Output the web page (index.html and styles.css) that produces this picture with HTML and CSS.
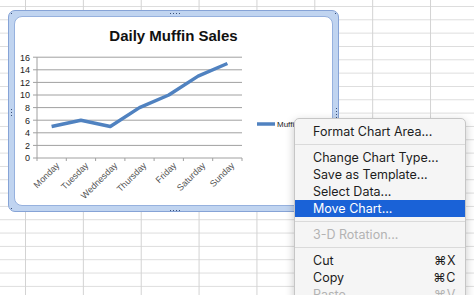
FILE: index.html
```html
<!DOCTYPE html>
<html lang="en">
<head>
    <meta charset="UTF-8">
    <title>Daily Muffin Sales</title>
    <link rel="stylesheet" href="styles.css">
</head>
<body>
    <div class="sheet">
        <div class="chart">
            <span class="handle handle-tl"></span>
            <span class="handle handle-tr"></span>
            <span class="handle handle-bl"></span>
            <span class="handle handle-br"></span>
            <span class="handle handle-top"></span>
            <span class="handle handle-bottom"></span>
            <span class="handle handle-left"></span>
            <span class="handle handle-right"></span>
            <div class="chart-area">
                <div class="chart-title">Daily Muffin Sales</div>
                <svg class="plot" width="318" height="157" viewBox="0 0 318 157">
                    <g class="grid">
                        <line x1="18" y1="9.2" x2="227" y2="9.2"/>
                        <line x1="18" y1="21.8" x2="227" y2="21.8"/>
                        <line x1="18" y1="34.4" x2="227" y2="34.4"/>
                        <line x1="18" y1="47" x2="227" y2="47"/>
                        <line x1="18" y1="59.6" x2="227" y2="59.6"/>
                        <line x1="18" y1="72.2" x2="227" y2="72.2"/>
                        <line x1="18" y1="84.8" x2="227" y2="84.8"/>
                        <line x1="18" y1="97.4" x2="227" y2="97.4"/>
                        <line x1="18" y1="110" x2="227" y2="110"/>
                        <line x1="22" y1="9.2" x2="22" y2="113"/>
                        <line x1="51.3" y1="110" x2="51.3" y2="113"/>
                        <line x1="80.6" y1="110" x2="80.6" y2="113"/>
                        <line x1="109.9" y1="110" x2="109.9" y2="113"/>
                        <line x1="139.1" y1="110" x2="139.1" y2="113"/>
                        <line x1="168.4" y1="110" x2="168.4" y2="113"/>
                        <line x1="197.7" y1="110" x2="197.7" y2="113"/>
                        <line x1="227" y1="110" x2="227" y2="113"/>
                    </g>
                    <g class="y-labels">
                        <text x="15" y="12.5">16</text>
                        <text x="15" y="25.1">14</text>
                        <text x="15" y="37.7">12</text>
                        <text x="15" y="50.3">10</text>
                        <text x="15" y="62.9">8</text>
                        <text x="15" y="75.5">6</text>
                        <text x="15" y="88.1">4</text>
                        <text x="15" y="100.7">2</text>
                        <text x="15" y="113.3">0</text>
                    </g>
                    <g class="x-labels">
                        <text transform="translate(45,118) rotate(-45)">Monday</text>
                        <text transform="translate(74,118) rotate(-45)">Tuesday</text>
                        <text transform="translate(103,118) rotate(-45)">Wednesday</text>
                        <text transform="translate(132,118) rotate(-45)">Thursday</text>
                        <text transform="translate(162,118) rotate(-45)">Friday</text>
                        <text transform="translate(191,118) rotate(-45)">Saturday</text>
                        <text transform="translate(220,118) rotate(-45)">Sunday</text>
                    </g>
                    <polyline class="series" points="36.6,78.5 65.9,72.2 95.3,78.5 124.5,59.6 153.8,47 183.1,28.1 212.4,15.5"/>
                    <line class="series" x1="242" y1="76" x2="260" y2="76"/>
                    <text class="legend" x="262" y="78.5">Muffin Sales</text>
                </svg>
            </div>
        </div>

        <div class="context-menu">
            <div class="menu-item">Format Chart Area...</div>
            <div class="menu-sep"></div>
            <div class="menu-item">Change Chart Type...</div>
            <div class="menu-item">Save as Template...</div>
            <div class="menu-item">Select Data...</div>
            <div class="menu-item selected">Move Chart...</div>
            <div class="menu-sep"></div>
            <div class="menu-item disabled">3-D Rotation...</div>
            <div class="menu-sep"></div>
            <div class="menu-item">Cut <span class="key">⌘X</span></div>
            <div class="menu-item">Copy <span class="key">⌘C</span></div>
            <div class="menu-item disabled">Paste <span class="key">⌘V</span></div>
        </div>
    </div>
</body>
</html>
```

FILE: styles.css
```css
body {
    margin: 0;
    width: 474px;
    height: 295px;
    overflow: hidden;
    background: #fff;
    font-family: "Liberation Sans", Arial, sans-serif;
}
.sheet {
    position: relative;
    width: 474px;
    height: 295px;
    background-color: #fff;
    background-image:
        linear-gradient(to right, #d3d3d3 1px, transparent 1px),
        linear-gradient(to bottom, #dcdcdc 1px, transparent 1px);
    background-size: 57.86px 100%, 100% 13.33px;
    background-position: 25px 0, 0 6px;
}

/* chart object */
.chart {
    position: absolute;
    left: 8px;
    top: 10px;
    width: 319px;
    height: 190px;
    padding: 5px;
    border: 1px solid #86a3d6;
    border-radius: 7px;
    background: #c0d4f0;
}
.chart-area {
    width: 317px;
    height: 188px;
    border: 1px solid #96b1de;
    border-radius: 8px;
    background: #fff;
    overflow: hidden;
}
.chart-title {
    height: 31px;
    padding-top: 12px;
    box-sizing: border-box;
    text-align: center;
    font-size: 15px;
    font-weight: bold;
    line-height: 14px;
    color: #111;
}
.plot {
    display: block;
}
.plot .grid line {
    stroke: #a0a0a0;
    stroke-width: 1;
}
.plot text {
    font-family: "Liberation Sans", Arial, sans-serif;
    font-size: 9px;
    fill: #222;
}
.plot .y-labels text {
    text-anchor: end;
}
.plot .x-labels text {
    text-anchor: end;
    fill: #555;
}
.plot .series {
    fill: none;
    stroke: #5082c0;
    stroke-width: 3.5;
    stroke-linejoin: round;
}
.plot .legend {
    font-size: 8px;
}

/* selection handles: small dotted grips */
.handle {
    position: absolute;
    width: 4px;
    height: 4px;
    background-image: radial-gradient(circle, #3a5079 0.6px, transparent 0.9px);
    background-size: 3px 3px;
}
.handle-tl { left: 1px; top: 1px; }
.handle-tr { right: 0; top: 1px; }
.handle-bl { left: 1px; bottom: 0; }
.handle-br { right: 0; bottom: 0; }
.handle-top { left: 160px; top: 1px; width: 12px; height: 3px; }
.handle-bottom { left: 160px; bottom: -1px; width: 12px; height: 3px; }
.handle-left { left: 1px; top: 97px; width: 3px; height: 10px; }
.handle-right { right: 0; top: 96px; width: 3px; height: 12px; }

/* context menu */
.context-menu {
    position: absolute;
    left: 294px;
    top: 118px;
    width: 170px;
    padding: 4px 0 0;
    border: 1px solid #c6c6c6;
    border-radius: 5px;
    background: #f5f5f5;
    box-shadow: 0 3px 10px rgba(0, 0, 0, 0.22);
    font-family: "Inter", "Liberation Sans", sans-serif;
    font-size: 12.5px;
    color: #1d1d1d;
}
.menu-item {
    display: flex;
    justify-content: space-between;
    height: 17px;
    line-height: 17px;
    padding: 0 9px 0 18px;
}
.menu-item.selected {
    background: #1a62d7;
    color: #fff;
}
.menu-item.disabled {
    color: #b3b3b3;
}
.menu-sep {
    height: 1px;
    margin: 4px 0;
    background: #dadada;
}
.key {
    letter-spacing: 0.5px;
}
```
